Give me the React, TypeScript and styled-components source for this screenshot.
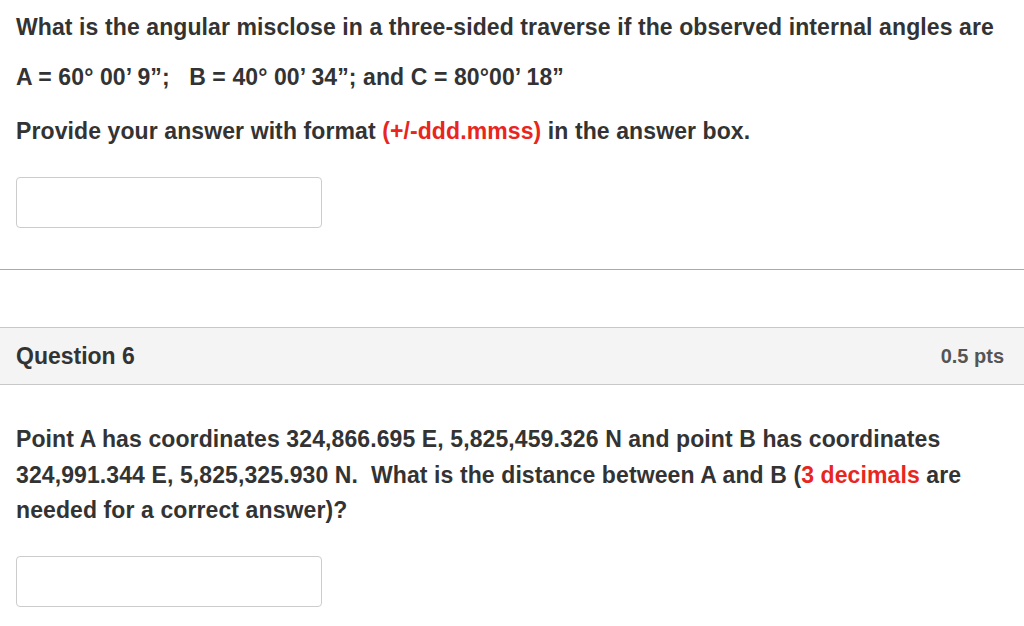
import React from 'react';
import styled, { createGlobalStyle } from 'styled-components';

const GlobalStyle = createGlobalStyle`
    body {
        margin : 0;
        background : #FFFFFF;
        font-family : "Liberation Sans", Arial, Helvetica, sans-serif;
        color : #333333;
    }
`

const Page = styled.div`
    width : 1024px;
    height : 626px;
    overflow : hidden;
    display : flex;
    flex-direction : column;
`

const Block = styled.div`
    padding : 0px 16px;
`

const Line = styled.p<{ $top: number }>`
    margin : ${(props) => props.$top}px 0px 0px 0px;
    font-size : 23px;
    font-weight : bold;
    line-height : 24px;
    letter-spacing : 0.1px;
    white-space : nowrap;
`

const Para = styled.p`
    margin : 0;
    font-size : 23px;
    font-weight : bold;
    line-height : 35.5px;
    letter-spacing : 0.1px;
    white-space : nowrap;
`

const Red = styled.span`
    color : #E8261E;
`

const AnswerBox = styled.input<{ $top: number }>`
    display : block;
    box-sizing : border-box;
    margin-top : ${(props) => props.$top}px;
    width : 306px;
    height : 51px;
    border : 1px solid #CCCCCC;
    border-radius : 4px;
    background : #FFFFFF;
    outline : none;
`

const Divider = styled.div`
    margin-top : 41px;
    height : 1px;
    background-color : #AAAAAA;
`

const QuestionHeader = styled.div`
    margin-top : 57px;
    box-sizing : border-box;
    height : 58px;
    display : flex;
    align-items : center;
    justify-content : space-between;
    padding : 0px 20px 0px 16px;
    background-color : #F4F4F4;
    border-top : 1px solid #C8C8C8;
    border-bottom : 1px solid #C8C8C8;
`

const HeaderTitle = styled.span`
    font-size : 23px;
    font-weight : bold;
    color : #333333;
`

const Points = styled.span`
    font-size : 20px;
    font-weight : bold;
    color : #555555;
`

const QuestionBody = styled.div`
    padding : 37px 16px 0px 16px;
`

const App = () => {
    return (
        <Page>
            <GlobalStyle />
            <Block>
                <Line $top={15}>What is the angular misclose in a three-sided traverse if the observed internal angles are</Line>
                <Line $top={26}>A = 60° 00’ 9”;&nbsp;&nbsp; B = 40° 00’ 34”; and C = 80°00’ 18”</Line>
                <Line $top={30}>Provide your answer with format <Red>(+/-ddd.mmss)</Red> in the answer box.</Line>
                <AnswerBox $top={34} />
            </Block>
            <Divider />
            <QuestionHeader>
                <HeaderTitle>Question 6</HeaderTitle>
                <Points>0.5 pts</Points>
            </QuestionHeader>
            <QuestionBody>
                <Para>
                    Point A has coordinates 324,866.695 E, 5,825,459.326 N and point B has coordinates<br />
                    324,991.344 E, 5,825,325.930 N.&nbsp; What is the distance between A and B (<Red>3 decimals</Red> are<br />
                    needed for a correct answer)?
                </Para>
                <AnswerBox $top={27} />
            </QuestionBody>
        </Page>
    )
}

export default App;
